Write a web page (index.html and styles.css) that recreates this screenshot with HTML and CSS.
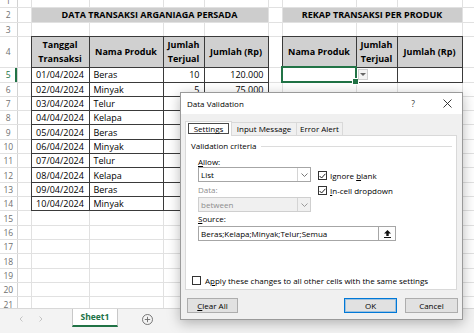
FILE: index.html
```html
<!DOCTYPE html>
<html lang="id">
<head>
  <meta charset="UTF-8" />
  <title>Data Validation - Sheet1</title>
  <link rel="stylesheet" href="styles.css">
</head>
<body>
  <div class="app">
    <div class="sheet">
      <table class="grid">
        <colgroup>
          <col class="c-rh"><col class="c-a"><col class="c-b"><col class="c-c"><col class="c-d"><col class="c-e"><col class="c-f"><col class="c-g"><col class="c-h"><col class="c-i"><col class="c-j">
        </colgroup>
        <tr class="r1"><th class="rh">1</th><td></td><td></td><td></td><td></td><td></td><td></td><td></td><td></td><td></td><td></td></tr>
        <tr class="r2"><th class="rh">2</th><td></td><td class="title" colspan="4">DATA TRANSAKSI ARGANIAGA PERSADA</td><td></td><td class="title" colspan="3">REKAP TRANSAKSI PER PRODUK</td><td></td></tr>
        <tr class="r3"><th class="rh">3</th><td></td><td></td><td></td><td></td><td></td><td></td><td></td><td></td><td></td><td></td></tr>
        <tr class="r4">
          <th class="rh">4</th><td></td>
          <td class="h">Tanggal<br>Transaksi</td><td class="h">Nama Produk</td><td class="h">Jumlah<br>Terjual</td><td class="h">Jumlah (Rp)</td>
          <td></td>
          <td class="h">Nama Produk</td><td class="h">Jumlah<br>Terjual</td><td class="h">Jumlah (Rp)</td>
          <td></td>
        </tr>
        <tr class="r5">
          <th class="rh cur">5</th><td></td>
          <td class="b c">01/04/2024</td><td class="b">Beras</td><td class="b n">10</td><td class="b n">120.000</td>
          <td></td>
          <td class="b sel"><span class="dd"><svg width="6" height="3" viewBox="0 0 6 3"><path d="M0 0H6L3 3Z" fill="#666"/></svg></span></td><td class="b"></td><td class="b"></td>
          <td></td>
        </tr>
        <tr><th class="rh">6</th><td></td><td class="b c">02/04/2024</td><td class="b">Minyak</td><td class="b n">5</td><td class="b n">75.000</td><td></td><td></td><td></td><td></td><td></td></tr>
        <tr><th class="rh">7</th><td></td><td class="b c">03/04/2024</td><td class="b">Telur</td><td class="b n"></td><td class="b n"></td><td></td><td></td><td></td><td></td><td></td></tr>
        <tr><th class="rh">8</th><td></td><td class="b c">04/04/2024</td><td class="b">Kelapa</td><td class="b n"></td><td class="b n"></td><td></td><td></td><td></td><td></td><td></td></tr>
        <tr><th class="rh">9</th><td></td><td class="b c">05/04/2024</td><td class="b">Beras</td><td class="b n"></td><td class="b n"></td><td></td><td></td><td></td><td></td><td></td></tr>
        <tr><th class="rh">10</th><td></td><td class="b c">06/04/2024</td><td class="b">Minyak</td><td class="b n"></td><td class="b n"></td><td></td><td></td><td></td><td></td><td></td></tr>
        <tr><th class="rh">11</th><td></td><td class="b c">07/04/2024</td><td class="b">Telur</td><td class="b n"></td><td class="b n"></td><td></td><td></td><td></td><td></td><td></td></tr>
        <tr><th class="rh">12</th><td></td><td class="b c">08/04/2024</td><td class="b">Kelapa</td><td class="b n"></td><td class="b n"></td><td></td><td></td><td></td><td></td><td></td></tr>
        <tr><th class="rh">13</th><td></td><td class="b c">09/04/2024</td><td class="b">Beras</td><td class="b n"></td><td class="b n"></td><td></td><td></td><td></td><td></td><td></td></tr>
        <tr><th class="rh">14</th><td></td><td class="b c">10/04/2024</td><td class="b">Minyak</td><td class="b n"></td><td class="b n"></td><td></td><td></td><td></td><td></td><td></td></tr>
        <tr><th class="rh">15</th><td></td><td></td><td></td><td></td><td></td><td></td><td></td><td></td><td></td><td></td></tr>
        <tr><th class="rh">16</th><td></td><td></td><td></td><td></td><td></td><td></td><td></td><td></td><td></td><td></td></tr>
        <tr><th class="rh">17</th><td></td><td></td><td></td><td></td><td></td><td></td><td></td><td></td><td></td><td></td></tr>
        <tr><th class="rh">18</th><td></td><td></td><td></td><td></td><td></td><td></td><td></td><td></td><td></td><td></td></tr>
        <tr><th class="rh">19</th><td></td><td></td><td></td><td></td><td></td><td></td><td></td><td></td><td></td><td></td></tr>
        <tr><th class="rh">20</th><td></td><td></td><td></td><td></td><td></td><td></td><td></td><td></td><td></td><td></td></tr>
        <tr><th class="rh">21</th><td></td><td></td><td></td><td></td><td></td><td></td><td></td><td></td><td></td><td></td></tr>
      </table>
    </div>

    <!-- sheet tabs -->
    <div class="tabbar">
      <div class="nav">
        <svg width="4" height="6" viewBox="0 0 4 6"><path d="M3.5 0.5L1 3l2.5 2.5" fill="none" stroke="#c4c4c4"/></svg>
        <svg width="4" height="6" viewBox="0 0 4 6"><path d="M0.5 0.5L3 3 0.5 5.5" fill="none" stroke="#c4c4c4"/></svg>
      </div>
      <div class="sheet-tab">Sheet1</div>
      <svg class="add" width="11" height="11" viewBox="0 0 11 11"><circle cx="5.5" cy="5.5" r="5" fill="none" stroke="#6a6a6a" stroke-width="0.9"/><path d="M5.5 2.8V8.2M2.8 5.5H8.2" stroke="#6a6a6a" stroke-width="0.9"/></svg>
    </div>

    <!-- Data Validation dialog -->
    <div class="dialog">
      <div class="dlg-title">
        <span class="dlg-name">Data Validation</span>
        <span class="dlg-help">?</span>
        <span class="dlg-close"><svg width="9" height="9" viewBox="0 0 9 9"><path d="M0.5 0.5L8.5 8.5M8.5 0.5L0.5 8.5" stroke="#222" stroke-width="0.9"/></svg></span>
      </div>
      <div class="dlg-body">
        <div class="tabs">
          <div class="tab t1 active"><span class="focus">Settings</span></div>
          <div class="tab t2">Input Message</div>
          <div class="tab t3">Error Alert</div>
        </div>
        <div class="panel">
          <div class="legend">Validation criteria</div>
          <div class="criteria">
            <div class="fields">
              <div class="lbl"><u>A</u>llow:</div>
              <div class="combo">
                <span>List</span>
                <i class="arr"><svg width="7" height="4" viewBox="0 0 7 4"><path d="M0.5 0.5L3.5 3.5 6.5 0.5" fill="none" stroke="#777"/></svg></i>
              </div>
              <div class="lbl dim gap">Data:</div>
              <div class="combo off">
                <span>between</span>
                <i class="arr"><svg width="7" height="4" viewBox="0 0 7 4"><path d="M0.5 0.5L3.5 3.5 6.5 0.5" fill="none" stroke="#999"/></svg></i>
              </div>
            </div>
            <div class="checks">
              <div class="chk"><span class="box"><svg width="7" height="6" viewBox="0 0 7 6"><path d="M0.6 3L2.6 5 6.4 0.8" fill="none" stroke="#222" stroke-width="1"/></svg></span><span>Ignore <u>b</u>lank</span></div>
              <div class="chk"><span class="box"><svg width="7" height="6" viewBox="0 0 7 6"><path d="M0.6 3L2.6 5 6.4 0.8" fill="none" stroke="#222" stroke-width="1"/></svg></span><span><u>I</u>n-cell dropdown</span></div>
            </div>
          </div>
          <div class="lbl src-lbl"><u>S</u>ource:</div>
          <div class="source">
            <span class="src-text">Beras;Kelapa;Minyak;Telur;Semua</span>
            <i class="pick"><svg width="7" height="8" viewBox="0 0 7 8"><path d="M3.5 0L7 3.5H4.7V6H2.3V3.5H0Z" fill="#111"/><rect y="7" width="7" height="1" fill="#111"/></svg></i>
          </div>
          <div class="chk apply"><span class="box"></span><span>A<u>p</u>ply these changes to all other cells with the same settings</span></div>
        </div>
        <div class="buttons">
          <button class="btn clear"><u>C</u>lear All</button>
          <button class="btn ok">OK</button>
          <button class="btn cancel">Cancel</button>
        </div>
      </div>
    </div>
  </div>
</body>
</html>
```
FILE: styles.css
```css
/* Reset and base */
* {
  margin: 0;
  padding: 0;
  box-sizing: border-box;
}

body {
  width: 474px;
  height: 333px;
  overflow: hidden;
  background: #fff;
  color: #000;
  font-family: "Open Sans", "Noto Sans", sans-serif;
}

.app {
  position: relative;
  width: 474px;
  height: 333px;
  overflow: hidden;
}

/* Worksheet grid */
.sheet {
  height: 308px;
  overflow: hidden;
}

.grid {
  width: 474px;
  table-layout: fixed;
  border-collapse: collapse;
  margin-top: -7px;
  font-size: 9px;
}

.grid col {
  border-right: 1px solid #e1e1e1;
}

.grid col.c-rh {
  border-right-color: #d2d2d2;
}

.c-rh { width: 17px; }
.c-a { width: 14px; }
.c-b { width: 58px; }
.c-c { width: 74px; }
.c-d { width: 41px; }
.c-e { width: 64px; }
.c-f { width: 14px; }
.c-g { width: 74px; }
.c-h { width: 41px; }
.c-i { width: 65px; }
.c-j { width: 12px; }

.grid tr {
  height: 14.33px;
  border-bottom: 1px solid #e1e1e1;
}

.grid tr.r1,
.grid tr.r2 { height: 14.5px; }
.grid tr.r3 { height: 14px; }
.grid tr.r4 { height: 31px; }
.grid tr.r5 { height: 15px; }

.grid th,
.grid td {
  padding: 0 4px;
  line-height: 11px;
  white-space: nowrap;
  overflow: hidden;
}

.grid .rh {
  padding: 0;
  font-weight: normal;
  font-size: 8.5px;
  color: #707070;
  text-align: center;
}

.grid .rh.cur {
  color: #217346;
  box-shadow: inset -2px 0 #217346;
}

.title {
  background: #cdcdcd;
  font-weight: bold;
  text-align: center;
}

.h {
  background: #d0d0d0;
  font-weight: bold;
  text-align: center;
  line-height: 14px !important;
  border: 1px solid #3a3a3a;
}

.b {
  border: 1px solid #3a3a3a;
}

.c { text-align: center; }
.n { text-align: right; }

.grid td.sel {
  position: relative;
  overflow: visible;
  outline: 2px solid #217346;
  outline-offset: -1px;
}

.sel::after {
  content: "";
  position: absolute;
  right: -3px;
  bottom: -3px;
  width: 5px;
  height: 5px;
  background: #217346;
  border: 1px solid #fff;
}

.dd {
  position: absolute;
  left: 100%;
  top: 1px;
  margin-left: 2px;
  width: 10px;
  height: 11px;
  display: flex;
  align-items: center;
  justify-content: center;
  background: #f3f3f3;
  border: 1px solid #d0d0d0;
  z-index: 2;
}

/* Sheet tab bar */
.tabbar {
  height: 25px;
  background: #f3f3f3;
  border-top: 1px solid #d8d8d8;
  display: flex;
  align-items: flex-start;
}

.nav {
  width: 72px;
  display: flex;
  gap: 16px;
  padding: 7px 0 0 19px;
}

.sheet-tab {
  width: 46px;
  height: 18px;
  background: #fff;
  color: #217346;
  font-weight: bold;
  font-size: 8.5px;
  line-height: 16px;
  text-align: center;
  border: 1px solid #c8c8c8;
  border-top: none;
  border-bottom: 2px solid #217346;
}

.add {
  margin: 5px 0 0 24px;
}

/* Dialog */
.dialog {
  position: absolute;
  left: 180px;
  top: 92px;
  width: 283px;
  background: #f0f0f0;
  border: 1px solid #9a9a9a;
  box-shadow: 0 3px 12px rgba(0, 0, 0, 0.28);
  font-size: 8px;
  line-height: 10px;
}

.dlg-title {
  height: 21px;
  background: #fff;
  display: flex;
  align-items: center;
  padding-left: 6px;
}

.dlg-name {
  flex: 1;
  font-size: 8px;
}

.dlg-help {
  width: 30px;
  margin-right: 4px;
  text-align: center;
  font-size: 8.5px;
  color: #333;
}

.dlg-close {
  width: 30px;
  display: flex;
  justify-content: center;
}

.dlg-body {
  padding: 7px 4px 6px 4px;
}

.tabs {
  display: flex;
  align-items: flex-end;
  height: 14px;
}

.tab {
  height: 13px;
  line-height: 12px;
  text-align: center;
  white-space: nowrap;
  background: #f0f0f0;
  border: 1px solid #d9d9d9;
  border-bottom: none;
  margin-left: -1px;
}

.tab.active {
  position: relative;
  z-index: 1;
  height: 15px;
  margin: 0 0 -1px 0;
  padding: 1px 2px 0;
  background: #fff;
}

.t1 { width: 47px; }
.t2 { width: 66px; }
.t3 { width: 47px; }

.focus {
  display: block;
  height: 11px;
  line-height: 9px;
  border: 1px solid #4a4a4a;
}

.panel {
  width: 272px;
  height: 155px;
  background: #fff;
  border: 1px solid #d9d9d9;
  padding: 5px 4px 0 5px;
}

.legend {
  display: flex;
  align-items: center;
  gap: 5px;
  height: 10px;
}

.legend::after {
  content: "";
  flex: 1;
  border-top: 1px solid #dcdcdc;
}

.criteria {
  display: flex;
  gap: 7px;
  margin: 6px 0 0 7px;
}

.fields {
  width: 113px;
}

.lbl {
  height: 10px;
}

.lbl.gap {
  margin-top: 3px;
  margin-bottom: 2px;
}

.dim {
  color: #8d8d8d;
}

.combo {
  height: 15px;
  display: flex;
  align-items: center;
  background: #fff;
  border: 1px solid #a6a6a6;
  padding-left: 2px;
}

.combo span {
  flex: 1;
}

.combo .arr {
  width: 13px;
  height: 100%;
  display: flex;
  align-items: center;
  justify-content: center;
  border-left: 1px solid #d4d4d4;
}

.combo.off {
  background: #f0f0f0;
  color: #8d8d8d;
  border-color: #cfcfcf;
}

.checks {
  margin-top: 11px;
}

.chk {
  display: flex;
  align-items: center;
  gap: 3px;
  height: 15px;
  white-space: nowrap;
}

.box {
  width: 9px;
  height: 9px;
  display: flex;
  align-items: center;
  justify-content: center;
  background: #fff;
  border: 1px solid #333;
}

.src-lbl {
  margin: 2px 0 0 7px;
}

.source {
  display: flex;
  width: 198px;
  height: 15px;
  margin: 2px 0 0 7px;
}

.src-text {
  flex: 1;
  padding-left: 2px;
  line-height: 13px;
  border: 1px solid #a6a6a6;
}

.pick {
  width: 17px;
  display: flex;
  align-items: center;
  justify-content: center;
  border: 1px solid #a6a6a6;
  border-left: none;
  background: #fdfdfd;
}

.apply {
  margin: 32px 0 0 1px;
  gap: 4px;
}

.buttons {
  display: flex;
  margin-top: 8px;
  padding-left: 2px;
}

.btn {
  height: 15px;
  font: inherit;
  color: #000;
  background: #e1e1e1;
  border: 1px solid #adadad;
}

.clear { width: 51px; }

.ok {
  width: 53px;
  margin-left: auto;
  border-color: #0078d7;
  box-shadow: inset 0 0 0 1px rgba(0, 120, 215, 0.3);
}

.cancel {
  width: 53px;
  margin-left: 8px;
}
```
